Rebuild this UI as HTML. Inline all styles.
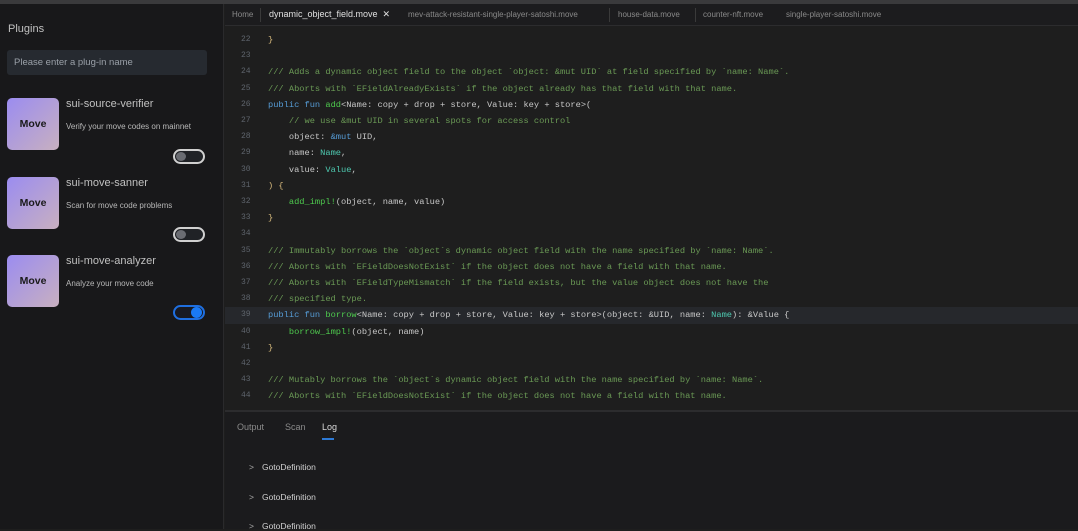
<!DOCTYPE html>
<html><head><meta charset="utf-8"><style>
*{margin:0;padding:0;box-sizing:border-box}
body{width:1078px;height:529px;overflow:hidden;background:#1e1e1e;font-family:"Liberation Sans",sans-serif;position:relative}
.top{position:absolute;left:0;top:0;width:1078px;height:4px;background:#3a3a3c}
.side{position:absolute;left:0;top:4px;width:224px;height:525px;background:#18181a;border-right:1px solid #2a2a2c}
.side h1{position:absolute;left:8px;top:19px;font-size:11px;font-weight:normal;color:#c0c0c0}
.inp{position:absolute;left:7px;top:46px;width:200px;height:25px;background:#262a30;border-radius:3px;color:#9aa0a8;font-size:9.5px;padding:7px 7px}
.card{position:absolute;left:7px;width:210px}
.logo{position:absolute;left:0;top:0;width:52px;height:52px;border-radius:5px;background:linear-gradient(135deg,#9b8cf0,#c8b0c0);color:#1a1a1a;font-size:10.5px;font-weight:bold;text-align:center;line-height:52px}
.tt{position:absolute;left:59px;top:0px;font-size:11px;color:#c0c0c0;white-space:nowrap}
.ds{position:absolute;left:59px;top:24px;font-size:8px;color:#b8b8b8;white-space:nowrap}
.tg{position:absolute;left:166px;width:32px;height:15px;border-radius:8px;border:2px solid #d0d0d0;background:#202226}
.tg i{position:absolute;left:1px;top:1px;width:10px;height:9px;border-radius:50%;background:#6a6c72}
.tg.on{border-color:#1f6fe0;background:#181a22}
.tg.on i{left:auto;right:1px;background:#1a7af5;width:11px;height:11px;top:0}
.tabs{position:absolute;left:225px;top:4px;width:853px;height:22px;background:#1c1c1e;border-bottom:1px solid #2c2c2e;font-size:8px;color:#8a8a8a;white-space:nowrap}
.tabs span{position:absolute;top:6px}
.tabs .act{color:#e0e0e0;font-size:9px;top:5px}
.sep{position:absolute;top:4px;width:1px;height:14px;background:#3a3a3a}
.code{position:absolute;left:225px;top:30px;width:853px;font-family:"Liberation Mono",monospace;font-size:8.7px;color:#c8c8c8}
.ln{position:absolute;height:16.2px;line-height:16.2px;white-space:pre;width:853px}
.ln b{font-weight:normal;position:absolute;left:16px;color:#5e646c;font-size:8px}
.ln s{text-decoration:none;position:absolute;left:43px}
.c{color:#6a9955}.k{color:#569cd6}.f{color:#dcdcaa}.t{color:#4ec9b0}.y{color:#d7ba7d}.g{color:#4ec94e}
.hl{background:#26282c}
.panel{position:absolute;left:225px;top:410px;width:853px;height:119px;background:#1b1b1d;border-top:2px solid #2c2c2e}
.pt{position:absolute;top:10px;font-size:9px;color:#8a8a8a}
.uline{position:absolute;top:26px;width:12px;height:1.5px;background:#2d7ad6}
.it{position:absolute;left:24px;font-size:8.5px;color:#d0d0d0}
.it em{font-style:normal;color:#aaa;margin-right:8px}
</style></head><body>
<div class="top"></div>
<div class="side">
<h1>Plugins</h1>
<div class="inp">Please enter a plug-in name</div>
<div class="card" style="top:94px"><div class="logo">Move</div><div class="tt">sui-source-verifier</div><div class="ds">Verify your move codes on mainnet</div><div class="tg" style="top:51px"><i></i></div></div>
<div class="card" style="top:173px"><div class="logo">Move</div><div class="tt">sui-move-sanner</div><div class="ds">Scan for move code problems</div><div class="tg" style="top:50px"><i></i></div></div>
<div class="card" style="top:251px"><div class="logo">Move</div><div class="tt">sui-move-analyzer</div><div class="ds">Analyze your move code</div><div class="tg on" style="top:50px"><i></i></div></div>
</div>
<div class="tabs">
<span style="left:7px">Home</span><div class="sep" style="left:35px"></div>
<span class="act" style="left:44px">dynamic_object_field.move &nbsp;✕</span>
<span style="left:183px">mev-attack-resistant-single-player-satoshi.move</span><div class="sep" style="left:384px"></div>
<span style="left:393px">house-data.move</span><div class="sep" style="left:470px"></div>
<span style="left:478px">counter-nft.move</span>
<span style="left:561px">single-player-satoshi.move</span>
</div>
<div class="code">
<div class="ln" style="top:2px"><b>22</b><s class="y">}</s></div>
<div class="ln" style="top:18.2px"><b>23</b></div>
<div class="ln" style="top:34.4px"><b>24</b><s class="c">/// Adds a dynamic object field to the object `object: &amp;mut UID` at field specified by `name: Name`.</s></div>
<div class="ln" style="top:50.6px"><b>25</b><s class="c">/// Aborts with `EFieldAlreadyExists` if the object already has that field with that name.</s></div>
<div class="ln" style="top:66.8px"><b>26</b><s><span class="k">public fun</span> <span class="g">add</span>&lt;Name: copy + drop + store, Value: key + store&gt;(</s></div>
<div class="ln" style="top:83px"><b>27</b><s>    <span class="c">// we use &amp;mut UID in several spots for access control</span></s></div>
<div class="ln" style="top:99.2px"><b>28</b><s>    object: <span class="k">&amp;mut</span> UID,</s></div>
<div class="ln" style="top:115.4px"><b>29</b><s>    name: <span class="t">Name</span>,</s></div>
<div class="ln" style="top:131.6px"><b>30</b><s>    value: <span class="t">Value</span>,</s></div>
<div class="ln" style="top:147.8px"><b>31</b><s><span class="y">) {</span></s></div>
<div class="ln" style="top:164px"><b>32</b><s>    <span class="g">add_impl!</span>(object, name, value)</s></div>
<div class="ln" style="top:180.2px"><b>33</b><s class="y">}</s></div>
<div class="ln" style="top:196.4px"><b>34</b></div>
<div class="ln" style="top:212.6px"><b>35</b><s class="c">/// Immutably borrows the `object`s dynamic object field with the name specified by `name: Name`.</s></div>
<div class="ln" style="top:228.8px"><b>36</b><s class="c">/// Aborts with `EFieldDoesNotExist` if the object does not have a field with that name.</s></div>
<div class="ln" style="top:245px"><b>37</b><s class="c">/// Aborts with `EFieldTypeMismatch` if the field exists, but the value object does not have the</s></div>
<div class="ln" style="top:261.2px"><b>38</b><s class="c">/// specified type.</s></div>
<div class="ln hl" style="top:277.4px"><b>39</b><s><span class="k">public fun</span> <span class="g">borrow</span>&lt;Name: copy + drop + store, Value: key + store&gt;(object: &amp;UID, name: <span class="t">Name</span>): &amp;Value {</s></div>
<div class="ln" style="top:293.6px"><b>40</b><s>    <span class="g">borrow_impl!</span>(object, name)</s></div>
<div class="ln" style="top:309.8px"><b>41</b><s class="y">}</s></div>
<div class="ln" style="top:326px"><b>42</b></div>
<div class="ln" style="top:342.2px"><b>43</b><s class="c">/// Mutably borrows the `object`s dynamic object field with the name specified by `name: Name`.</s></div>
<div class="ln" style="top:358.4px"><b>44</b><s class="c">/// Aborts with `EFieldDoesNotExist` if the object does not have a field with that name.</s></div>
</div>
<div class="panel">
<span class="pt" style="left:12px">Output</span><span class="pt" style="left:60px">Scan</span><span class="pt" style="left:97px;color:#d8d8d8">Log</span>
<div class="uline" style="left:97px"></div>
<div class="it" style="top:50px"><em>&gt;</em>GotoDefinition</div>
<div class="it" style="top:80px"><em>&gt;</em>GotoDefinition</div>
<div class="it" style="top:109px"><em>&gt;</em>GotoDefinition</div>
</div>
</body></html>
